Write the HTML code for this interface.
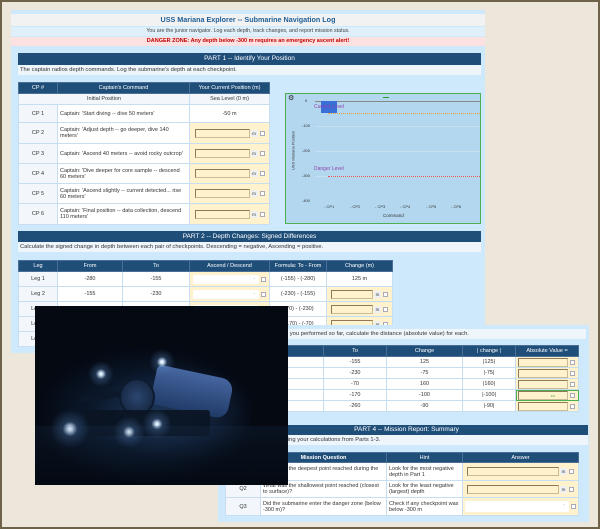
<!DOCTYPE html>
<html><head><meta charset="utf-8"><style>
*{box-sizing:border-box;margin:0;padding:0}
body{width:600px;height:529px;overflow:hidden;background:#ede6da;font-family:"Liberation Sans",sans-serif;font-size:5.5px;color:#333;position:relative}
.frame{position:absolute;left:0;top:0;width:600px;height:529px;border:2px solid #6e6248}
.a{position:absolute}
.bar{position:absolute;background:#1f4e79;color:#fff;text-align:center;font-size:6.5px;line-height:11px}
.ins{position:absolute;background:#eef5fb;color:#333;font-size:5.8px;line-height:10px;padding-left:2px}
table{position:absolute;border-collapse:collapse;table-layout:fixed;font-size:5.5px}
td,th{border:1px solid #c7def0;text-align:center;padding:0 2px;overflow:hidden}
th{background:#1f4e79;color:#fff;font-weight:normal;border-color:#4a6f96}
td.l{text-align:left}
td.g{background:#f3f7fb}
td.y{background:#fff2cc}
td.w{background:#fff}
.in{display:inline-block;vertical-align:middle;background:#fff2cc;border:1px solid #8d7a55;border-right-color:#c9bb98;border-bottom-color:#c9bb98}
.m{display:inline-block;vertical-align:middle;background:#eef0f2;width:7px;height:7px;font-size:4.5px;line-height:7px;text-align:center;margin-left:1px}
.cb{display:inline-block;vertical-align:middle;width:5px;height:5px;border:1px solid #aab;background:#fff;margin-left:2px}
.sel{display:inline-block;vertical-align:middle;background:#fff;border-radius:2px;color:#bbb;text-align:right;font-size:4px;padding-right:3px}
.lt{position:absolute;border-radius:50%}
</style></head><body>
<div class="frame"></div>
<div class="a" style="left:11px;top:10px;width:474px;height:343px;background:#cde9fb"></div>
<div class="a" style="left:11px;top:14px;width:474px;height:12px;background:#f2f2f2;color:#1f5e95;font-weight:bold;font-size:7.2px;line-height:12px;text-align:center">USS Mariana Explorer -- Submarine Navigation Log</div>
<div class="a" style="left:11px;top:27px;width:474px;height:9px;background:#dff0fb;font-size:5.3px;line-height:9px;text-align:center;color:#444">You are the junior navigator. Log each depth, track changes, and report mission status.</div>
<div class="a" style="left:11px;top:37px;width:474px;height:9px;background:#fde0e0;font-size:5.5px;line-height:9px;text-align:center;color:#c00000;font-weight:bold">DANGER ZONE: Any depth below -300 m requires an emergency ascent alert!</div>

<div class="bar" style="left:18px;top:53px;width:463px;height:12px;line-height:12px">PART 1 -- Identify Your Position</div>
<div class="ins" style="left:18px;top:65px;width:463px;height:10px">The captain radios depth commands. Log the submarine's depth at each checkpoint.</div>

<table style="left:18px;top:82px;width:251px">
<col style="width:39px"><col style="width:132px"><col style="width:80px">
<tr style="height:11px"><th>CP #</th><th>Captain's Command</th><th>Your Current Position (m)</th></tr>
<tr style="height:11px"><td class="g" colspan="2">Initial Position</td><td class="g">Sea Level (0 m)</td></tr>
<tr style="height:18px"><td class="g">CP 1</td><td class="l w">Captain: 'Start diving -- dive 50 meters'</td><td class="w">-50 m</td></tr>
<tr style="height:21px"><td class="g">CP 2</td><td class="l w">Captain: 'Adjust depth -- go deeper, dive 140 meters'</td><td class="y"><span class="in" style="width:55px;height:9px"></span><span class="m">m</span><span class="cb"></span></td></tr>
<tr style="height:20px"><td class="g">CP 3</td><td class="l w">Captain: 'Ascend 40 meters -- avoid rocky outcrop'</td><td class="y"><span class="in" style="width:55px;height:9px"></span><span class="m">m</span><span class="cb"></span></td></tr>
<tr style="height:20px"><td class="g">CP 4</td><td class="l w">Captain: 'Dive deeper for core sample -- descend 60 meters'</td><td class="y"><span class="in" style="width:55px;height:9px"></span><span class="m">m</span><span class="cb"></span></td></tr>
<tr style="height:20px"><td class="g">CP 5</td><td class="l w">Captain: 'Ascend slightly -- current detected... rise 60 meters'</td><td class="y"><span class="in" style="width:55px;height:9px"></span><span class="m">m</span><span class="cb"></span></td></tr>
<tr style="height:21px"><td class="g">CP 6</td><td class="l w">Captain: 'Final position -- data collection, descend 110 meters'</td><td class="y"><span class="in" style="width:55px;height:9px"></span><span class="m">m</span><span class="cb"></span></td></tr>
</table>

<div class="a" style="left:285px;top:93px;width:196px;height:131px;background:#b3d7ef;border:1.5px solid #4caf50"></div>
<div class="a" style="left:288px;top:94px;font-size:7px;color:#222">⚙</div>
<div class="a" style="left:315px;top:101px;width:165px;height:1px;background:#888"></div>
<div class="a" style="left:315px;top:126px;width:165px;height:1px;background:#c6e0f2"></div>
<div class="a" style="left:315px;top:151px;width:165px;height:1px;background:#c6e0f2"></div>
<div class="a" style="left:315px;top:176px;width:165px;height:1px;background:#c6e0f2"></div>
<div class="a" style="left:383px;top:97px;width:6px;height:1px;background:#2a9d2a"></div>
<div class="a" style="left:321px;top:101px;width:16px;height:12px;background:#3a6fd8"></div>
<div class="a" style="left:314px;top:104px;font-size:5px;color:#8e44ad">Current Level</div>
<div class="a" style="left:328px;top:113px;width:152px;border-top:1px dotted #f0a030"></div>
<div class="a" style="left:314px;top:166px;font-size:5px;color:#8e44ad">Danger Level</div>
<div class="a" style="left:328px;top:176px;width:152px;border-top:1px dotted #e05050"></div>
<div class="a" style="left:305px;top:98px;font-size:4px;color:#333">0</div>
<div class="a" style="left:302px;top:123px;font-size:4px;color:#333">-100</div>
<div class="a" style="left:302px;top:148px;font-size:4px;color:#333">-200</div>
<div class="a" style="left:302px;top:173px;font-size:4px;color:#333">-300</div>
<div class="a" style="left:302px;top:198px;font-size:4px;color:#333">-400</div>
<div class="a" style="left:273px;top:148px;width:40px;font-size:4px;color:#333;transform:rotate(-90deg);text-align:center">USS Mariana Position</div>
<div class="a" style="left:324px;top:204px;font-size:4px;color:#333">- CP1</div>
<div class="a" style="left:350px;top:204px;font-size:4px;color:#333">- CP2</div>
<div class="a" style="left:375px;top:204px;font-size:4px;color:#333">- CP3</div>
<div class="a" style="left:400px;top:204px;font-size:4px;color:#333">- CP4</div>
<div class="a" style="left:426px;top:204px;font-size:4px;color:#333">- CP5</div>
<div class="a" style="left:451px;top:204px;font-size:4px;color:#333">- CP6</div>
<div class="a" style="left:383px;top:213px;font-size:4.5px;color:#333">Command</div>

<div class="bar" style="left:18px;top:231px;width:463px;height:11px">PART 2 -- Depth Changes: Signed Differences</div>
<div class="ins" style="left:18px;top:242px;width:463px;height:10px">Calculate the signed change in depth between each pair of checkpoints. Descending = negative, Ascending = positive.</div>
<table style="left:18px;top:260px;width:374px">
<col style="width:39px"><col style="width:65px"><col style="width:67px"><col style="width:80px"><col style="width:57px"><col style="width:66px">
<tr style="height:11px"><th>Leg</th><th>From</th><th>To</th><th>Ascend / Descend</th><th>Formula: To - From</th><th>Change (m)</th></tr>
<tr style="height:15px"><td class="g">Leg 1</td><td class="w">-280</td><td class="w">-155</td><td class="y"><span class="sel" style="width:66px;height:9px">⌄</span><span class="cb"></span></td><td class="w">(-155) - (-280)</td><td class="w">125 m</td></tr>
<tr style="height:15px"><td class="g">Leg 2</td><td class="w">-155</td><td class="w">-230</td><td class="y"><span class="sel" style="width:66px;height:9px">⌄</span><span class="cb"></span></td><td class="w">(-230) - (-155)</td><td class="y"><span class="in" style="width:42px;height:9px"></span><span class="m">m</span><span class="cb"></span></td></tr>
<tr style="height:15px"><td class="g">Leg 3</td><td class="w">-230</td><td class="w">-70</td><td class="y"><span class="sel" style="width:66px;height:9px">⌄</span><span class="cb"></span></td><td class="w">(-70) - (-230)</td><td class="y"><span class="in" style="width:42px;height:9px"></span><span class="m">m</span><span class="cb"></span></td></tr>
<tr style="height:15px"><td class="g">Leg 4</td><td class="w">-70</td><td class="w">-170</td><td class="y"></td><td class="w">(-170) - (-70)</td><td class="y"><span class="in" style="width:42px;height:9px"></span><span class="m">m</span><span class="cb"></span></td></tr>
<tr style="height:15px"><td class="g">Leg 5</td><td class="w">-170</td><td class="w">-260</td><td class="y"></td><td class="w"></td><td class="y"></td></tr>
</table>

<div class="a" style="left:218px;top:325px;width:371px;height:197px;background:#cde9fb"></div>
<div class="ins" style="left:222px;top:329px;width:364px;height:10px">Using the depth changes you performed so far, calculate the distance (absolute value) for each.</div>
<table style="left:225px;top:345px;width:353px">
<col style="width:98px"><col style="width:63px"><col style="width:76px"><col style="width:53px"><col style="width:63px">
<tr style="height:11px"><th>From</th><th>To</th><th>Change</th><th>| change |</th><th>Absolute Value =</th></tr>
<tr style="height:11px"><td class="w">-280</td><td class="w">-155</td><td class="w">125</td><td class="w">|125|</td><td class="y" style="text-align:left"><span class="in" style="width:50px;height:9px"></span><span class="cb"></span></td></tr>
<tr style="height:11px"><td class="w">-155</td><td class="w">-230</td><td class="w">-75</td><td class="w">|-75|</td><td class="y" style="text-align:left"><span class="in" style="width:50px;height:9px"></span><span class="cb"></span></td></tr>
<tr style="height:11px"><td class="w">-230</td><td class="w">-70</td><td class="w">160</td><td class="w">|160|</td><td class="y" style="text-align:left"><span class="in" style="width:50px;height:9px"></span><span class="cb"></span></td></tr>
<tr style="height:11px"><td class="w">-70</td><td class="w">-170</td><td class="w">-100</td><td class="w">|-100|</td><td class="y" style="text-align:left;outline:1.5px solid #4caf50;outline-offset:-1px"><span class="in" style="width:50px;height:9px;font-size:4px;line-height:7px;text-align:right;color:#2a9d2a;padding-right:12px">•••</span><span class="cb"></span></td></tr>
<tr style="height:11px"><td class="w">-170</td><td class="w">-260</td><td class="w">-90</td><td class="w">|-90|</td><td class="y" style="text-align:left"><span class="in" style="width:50px;height:9px"></span><span class="cb"></span></td></tr>
</table>
<div class="bar" style="left:225px;top:425px;width:363px;height:10px;line-height:10px">PART 4 -- Mission Report: Summary</div>
<div class="ins" style="left:225px;top:435px;width:363px;height:10px">Answer the following using your calculations from Parts 1-3.</div>
<table style="left:225px;top:452px;width:353px">
<col style="width:35px"><col style="width:126px"><col style="width:76px"><col style="width:116px">
<tr style="height:10px"><th>Q</th><th style="font-weight:bold">Mission Question</th><th>Hint</th><th>Answer</th></tr>
<tr style="height:18px"><td class="g">Q1</td><td class="l w">What was the deepest point reached during the dive?</td><td class="l w">Look for the most negative depth in Part 1</td><td class="y"><span class="in" style="width:92px;height:9px"></span><span class="m">m</span><span class="cb"></span></td></tr>
<tr style="height:17px"><td class="g">Q2</td><td class="l w">What was the shallowest point reached (closest to surface)?</td><td class="l w">Look for the least negative (largest) depth</td><td class="y"><span class="in" style="width:92px;height:9px"></span><span class="m">m</span><span class="cb"></span></td></tr>
<tr style="height:18px"><td class="g">Q3</td><td class="l w">Did the submarine enter the danger zone (below -300 m)?</td><td class="l w">Check if any checkpoint was below -300 m</td><td class="y"><span class="sel" style="width:104px;height:11px">⌄</span><span class="cb"></span></td></tr>
</table>

<div class="a" style="left:35px;top:306px;width:253px;height:179px;overflow:hidden;background:radial-gradient(ellipse 110px 70px at 110px 110px,#142a44 0%,#0a1628 55%,#040912 100%)">
  <div class="a" style="left:60px;top:55px;width:160px;height:100px;background:radial-gradient(ellipse at 50% 50%,rgba(50,85,140,.35),rgba(0,0,0,0) 70%)"></div>
  <div class="a" style="left:118px;top:66px;width:78px;height:40px;background:linear-gradient(180deg,#4d6fae,#223d6c);border-radius:5px 12px 12px 4px;transform:rotate(12deg);opacity:.9"></div>
  <div class="a" style="left:84px;top:72px;width:36px;height:38px;border-radius:50%;background:radial-gradient(circle,#2c4670,#101f36);border:2px solid #0e1b2e"></div>
  <div class="a" style="left:50px;top:104px;width:125px;height:26px;background:#0a1422;border-radius:3px;opacity:.9"></div>
  <div class="a" style="left:45px;top:88px;width:40px;height:6px;background:#0c182a;transform:rotate(-10deg)"></div>
  <div class="lt" style="left:53px;top:55px;width:26px;height:26px;background:radial-gradient(circle,#fff 0,#cfe4f8 8%,rgba(90,140,200,.3) 28%,rgba(0,0,0,0) 70%)"></div>
  <div class="lt" style="left:114px;top:43px;width:26px;height:26px;background:radial-gradient(circle,#fff 0,#d8ebff 8%,rgba(90,140,200,.3) 28%,rgba(0,0,0,0) 70%)"></div>
  <div class="lt" style="left:15px;top:103px;width:40px;height:40px;background:radial-gradient(circle,#fff 0,#cfe4f8 7%,rgba(90,140,200,.3) 26%,rgba(0,0,0,0) 70%)"></div>
  <div class="lt" style="left:78px;top:110px;width:32px;height:32px;background:radial-gradient(circle,#fff 0,#cfe4f8 7%,rgba(90,140,200,.3) 26%,rgba(0,0,0,0) 70%)"></div>
  <div class="lt" style="left:107px;top:103px;width:30px;height:30px;background:radial-gradient(circle,#fff 0,#cfe4f8 7%,rgba(90,140,200,.3) 26%,rgba(0,0,0,0) 70%)"></div>
  <div class="a" style="left:0;top:120px;width:253px;height:59px;background:linear-gradient(180deg,rgba(40,70,110,.15),rgba(4,9,18,.4))"></div>
</div>
</body></html>
